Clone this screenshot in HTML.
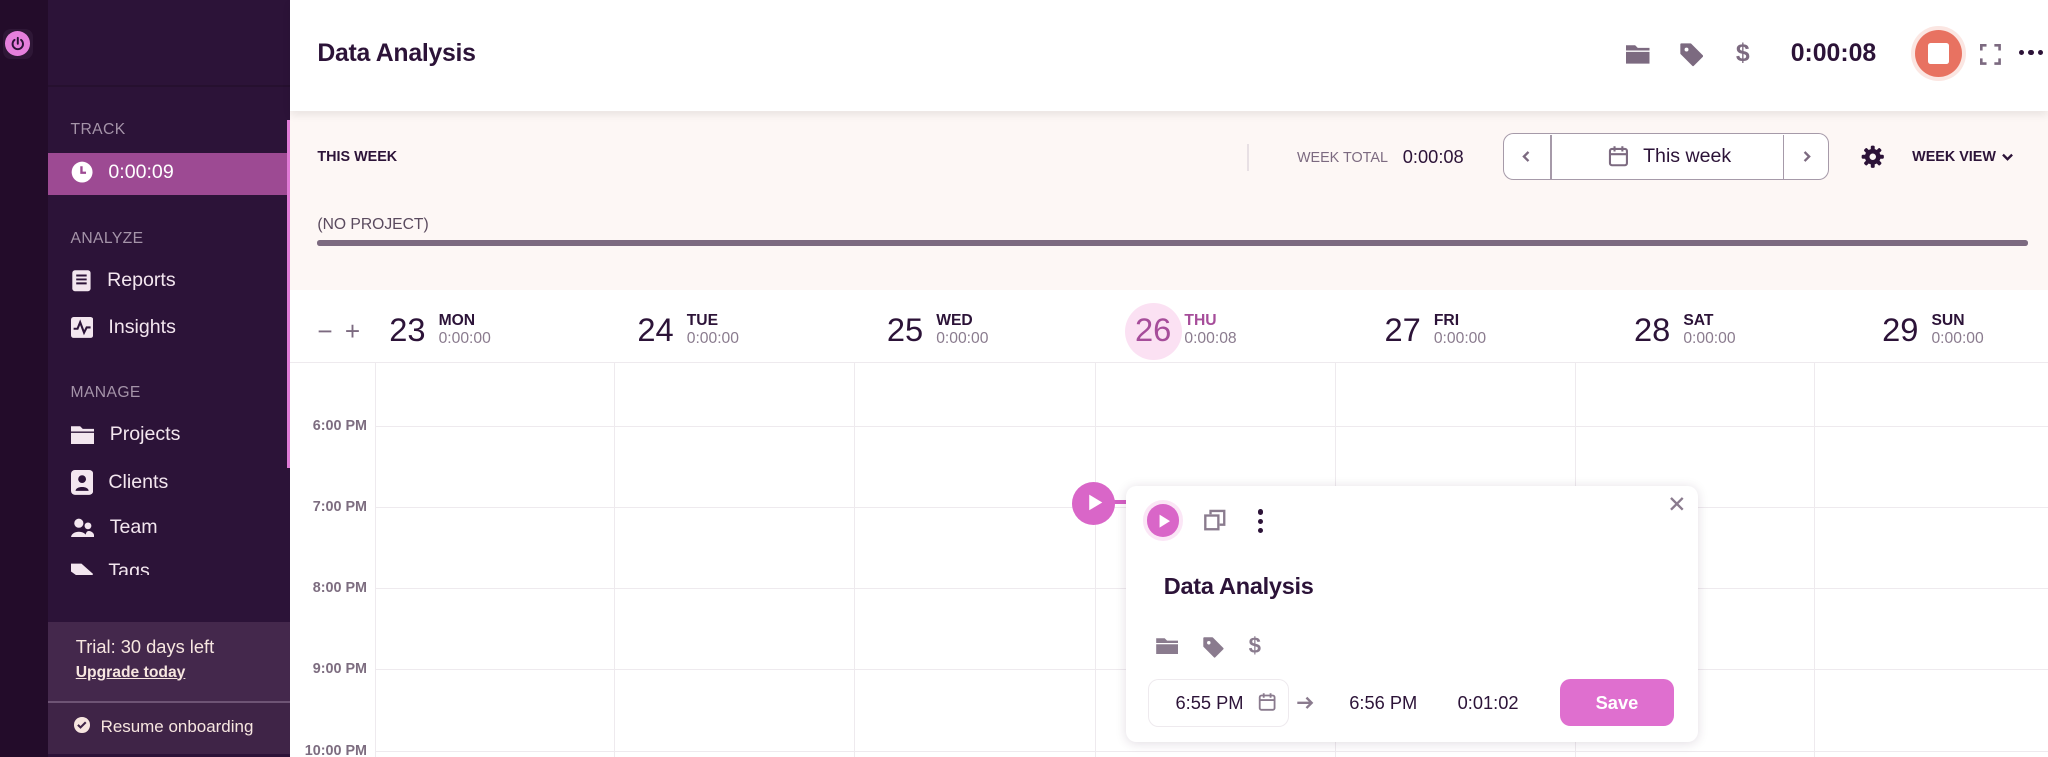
<!DOCTYPE html>
<html><head><meta charset="utf-8">
<style>
html,body{margin:0;padding:0;overflow:hidden;width:2048px;height:757px;background:#fff}
#w{zoom:1.30612;width:1568px;height:580px;position:relative;overflow:hidden;font-family:"Liberation Sans",sans-serif;color:#2c1338}
.a{position:absolute}
.side .lbl{position:absolute;left:54px;font-size:12px;color:#a594a9;letter-spacing:.3px}
.side .it{position:absolute;left:54px;font-size:15px;color:#f3e6ef;display:flex;align-items:center;gap:12px}
.ic{width:16px;height:16px;background:#f3e6ef;border-radius:2px;display:inline-block}
.day{position:absolute;top:238px;display:flex;align-items:center;gap:10px}
.day .n{font-size:25px;color:#2c1338;font-weight:300}
.day .d{font-size:12px;font-weight:bold;line-height:14px}
.day .t{font-size:12px;color:#8a7b8e;font-weight:normal}
.vl{position:absolute;top:278px;width:1px;height:302px;background:#eeeaee}
.hl{position:absolute;left:287px;width:1281px;height:1px;background:#eeeaee}
.tm{position:absolute;right:1287px;font-size:11px;color:#7d6d80;font-weight:bold;transform:translateY(-50%)}
</style></head><body><div id="w">
<!-- far strip -->
<div class="a" style="left:0;top:0;width:37px;height:580px;background:#230c2a"></div>
<div class="a" style="left:2px;top:22px;width:23px;height:23px;border-radius:6px;background:#2e1736"></div>
<div class="a" style="left:4px;top:24px;width:19px;height:19px;border-radius:50%;background:#e57fdc"></div>
<svg class="a" style="left:6px;top:26px" width="15" height="15" viewBox="0 0 15 15"><path d="M5 4.5a4 4 0 1 0 5 0M7.5 3v4.5" stroke="#2c1338" stroke-width="1.5" fill="none" stroke-linecap="round"/></svg>
<!-- sidebar -->
<div class="side a" style="left:37px;top:0;width:185px;height:580px;background:#2c1338">
<div class="a" style="left:0;top:0;width:185px;height:65px;background:#2c1338;border-bottom:2px solid #26102f"></div>
</div>
<div class="side a" style="left:0;top:0;width:222px;height:580px">
<div class="lbl" style="top:93px">TRACK</div>
<div class="a" style="left:37px;top:117px;width:183px;height:32px;background:#9d4a93"></div>
<div class="it" style="top:123px;color:#fff"><svg width="17" height="17" viewBox="0 0 17 17"><circle cx="8.5" cy="8.5" r="8" fill="#fff"/><path d="M8 4v5h3.5" stroke="#9d4a93" stroke-width="1.8" fill="none"/></svg>0:00:09</div>
<div class="lbl" style="top:176px">ANALYZE</div>
<div class="it" style="top:206px"><svg width="16" height="18" viewBox="0 0 16 18"><rect x="1" y="1" width="14" height="16" rx="2" fill="#f3e6ef"/><path d="M4 5h8M4 8h8M4 11h8" stroke="#2c1338" stroke-width="1.5"/></svg>Reports</div>
<div class="it" style="top:242px"><svg width="17" height="16" viewBox="0 0 17 16"><rect x="0" y="0" width="17" height="16" rx="2" fill="#f3e6ef"/><path d="M2 9h3l2-5 3 8 2-4h3" stroke="#2c1338" stroke-width="1.6" fill="none"/></svg>Insights</div>
<div class="lbl" style="top:294px">MANAGE</div>
<div class="it" style="top:324px"><svg width="18" height="15" viewBox="0 0 18 15"><path d="M0 1h7l2 2h9v2H0zM0 6h18v9H0z" fill="#f3e6ef"/></svg>Projects</div>
<div class="it" style="top:360px"><svg width="17" height="19" viewBox="0 0 17 19"><rect width="17" height="19" rx="3" fill="#f3e6ef"/><circle cx="8.5" cy="7" r="3" fill="#2c1338"/><path d="M3.5 16c0-4 10-4 10 0z" fill="#2c1338"/></svg>Clients</div>
<div class="it" style="top:395px"><svg width="18" height="15" viewBox="0 0 18 15"><circle cx="6" cy="4" r="3.5" fill="#f3e6ef"/><path d="M0 15c0-6 12-6 12 0z" fill="#f3e6ef"/><circle cx="13" cy="6" r="2.6" fill="#f3e6ef"/><path d="M11 15c0-3 1-5 2.5-5S18 11 18 15z" fill="#f3e6ef"/></svg>Team</div>
<div class="a" style="left:54px;top:428px;width:140px;height:12px;overflow:hidden"><div class="it" style="left:0;top:1px"><svg width="17" height="16" viewBox="0 0 17 16"><path d="M0 2h8l9 8-6 6L0 8z" fill="#f3e6ef"/></svg>Tags</div></div>
<div class="a" style="left:37px;top:476px;width:185px;height:61px;background:#44284c"></div>
<div class="a" style="left:58px;top:487px;font-size:14px;color:#f7e6e0">Trial: 30 days left</div>
<div class="a" style="left:58px;top:508px;font-size:12px;color:#f7e6e0;font-weight:bold;text-decoration:underline">Upgrade today</div>
<div class="a" style="left:37px;top:537px;width:185px;height:1px;background:#6e5475"></div>
<div class="a" style="left:37px;top:538px;width:185px;height:39px;background:#3f2447"></div>
<div class="a" style="left:57px;top:549px;width:12px;height:12px;border-radius:50%;background:#f7e6e0"></div>
<svg class="a" style="left:57px;top:549px" width="12" height="12"><path d="M3 6l2 2 4-4" stroke="#3f2447" stroke-width="1.6" fill="none"/></svg>
<div class="a" style="left:77px;top:549px;font-size:13px;color:#f7e6e0">Resume onboarding</div>
<div class="a" style="left:220px;top:92px;width:2px;height:266px;background:#e07ad6"></div>
</div>
<!-- header -->
<div class="a" style="left:222px;top:0;width:1346px;height:85px;background:#fff;box-shadow:0 3px 6px rgba(0,0,0,.08);z-index:2"></div>
<div class="a" style="left:243px;top:31px;font-size:19px;font-weight:bold;z-index:3;letter-spacing:-.2px">Data Analysis</div>
<svg class="a" style="left:1245px;top:34px;z-index:3" width="18" height="15" viewBox="0 0 18 15"><path d="M0 1h7l2 2h9v2H0zM0 6h18v9H0z" fill="#7c6a80"/></svg>
<svg class="a" style="left:1286px;top:33px;z-index:3" width="18" height="18" viewBox="0 0 18 18"><path d="M1 1h7l9 9-7 7-9-9z" fill="#7c6a80" stroke="#7c6a80" stroke-linejoin="round" stroke-width="1.5"/><circle cx="5" cy="5" r="1.5" fill="#fff"/></svg>
<div class="a" style="left:1329px;top:31px;font-size:19px;font-weight:bold;color:#7c6a80;z-index:3">$</div>
<div class="a" style="left:1371px;top:31px;font-size:19px;font-weight:bold;z-index:3">0:00:08</div>
<div class="a" style="left:1463px;top:20px;width:42px;height:42px;border-radius:50%;background:#fbe6e2;z-index:3"></div>
<div class="a" style="left:1466px;top:23px;width:36px;height:36px;border-radius:50%;background:#e87261;z-index:3"></div>
<div class="a" style="left:1476px;top:33px;width:16px;height:16px;border-radius:2px;background:#fff;z-index:3"></div>
<svg class="a" style="left:1516px;top:34px;z-index:3" width="16" height="16" viewBox="0 0 16 16"><path d="M1 5V1h4M11 1h4v4M15 11v4h-4M5 15H1v-4" stroke="#7c6a80" stroke-width="2" fill="none"/></svg>
<div class="a" style="left:1546px;top:38px;z-index:3;display:flex;gap:3px"><i style="width:4px;height:4px;border-radius:50%;background:#2c1338"></i><i style="width:4px;height:4px;border-radius:50%;background:#2c1338"></i><i style="width:4px;height:4px;border-radius:50%;background:#2c1338"></i></div>
<!-- summary -->
<div class="a" style="left:222px;top:85px;width:1346px;height:137px;background:#fdf7f5"></div>
<div class="a" style="left:243px;top:114px;font-size:11px;font-weight:bold">THIS WEEK</div>
<div class="a" style="left:955px;top:110px;width:1px;height:21px;background:#e8e0e4"></div>
<div class="a" style="left:993px;top:115px;font-size:11px;color:#7c6a80">WEEK TOTAL</div>
<div class="a" style="left:1074px;top:112px;font-size:14px">0:00:08</div>
<div class="a" style="left:1151px;top:102px;width:248px;height:34px;border:1px solid #a69aa9;border-radius:8px;background:#fff"></div>
<div class="a" style="left:1187px;top:103px;width:1px;height:34px;background:#a69aa9"></div>
<div class="a" style="left:1365px;top:103px;width:1px;height:34px;background:#a69aa9"></div>
<svg class="a" style="left:1164px;top:115px" width="10" height="10"><path d="M6.5 1.5L3 5l3.5 3.5" stroke="#7c6a80" stroke-width="1.8" fill="none"/></svg>
<svg class="a" style="left:1378px;top:115px" width="10" height="10"><path d="M3.5 1.5L7 5 3.5 8.5" stroke="#7c6a80" stroke-width="1.8" fill="none"/></svg>
<svg class="a" style="left:1231px;top:111px" width="16" height="17" viewBox="0 0 16 17"><rect x="1.5" y="3" width="13" height="12.5" rx="1.5" stroke="#7c6a80" stroke-width="1.6" fill="none"/><path d="M1.5 7h13M5 1v4M11 1v4" stroke="#7c6a80" stroke-width="1.6"/></svg>
<div class="a" style="left:1258px;top:111px;font-size:15px">This week</div>
<svg class="a" style="left:1425px;top:111px" width="18" height="18" viewBox="0 0 18 18"><g fill="#2c1338"><circle cx="9" cy="9" r="6"/><rect x="7.5" y="0.5" width="3" height="17" rx="1"/><rect x="0.5" y="7.5" width="17" height="3" rx="1"/><rect x="7.5" y="0.5" width="3" height="17" rx="1" transform="rotate(45 9 9)"/><rect x="7.5" y="0.5" width="3" height="17" rx="1" transform="rotate(-45 9 9)"/></g><circle cx="9" cy="9" r="2.5" fill="#fdf7f5"/></svg>
<div class="a" style="left:1464px;top:114px;font-size:11px;font-weight:bold">WEEK VIEW</div>
<svg class="a" style="left:1532px;top:116px" width="10" height="8"><path d="M1.5 2l3.5 3.5L8.5 2" stroke="#2c1338" stroke-width="1.8" fill="none"/></svg>
<div class="a" style="left:243px;top:165px;font-size:12px;color:#5a4a5e">(NO PROJECT)</div>
<div class="a" style="left:243px;top:184px;width:1310px;height:4px;border-radius:2px;background:#7c6a80"></div>
<!-- day header -->
<div class="a" style="left:222px;top:277px;width:1346px;height:1px;background:#eeeaee"></div>
<div class="a" style="left:243px;top:242px;font-size:20px;color:#7c6a80">−</div>
<div class="a" style="left:264px;top:242px;font-size:20px;color:#7c6a80">+</div>
<div class="a" style="left:861px;top:232px;width:44px;height:44px;border-radius:50%;background:#fbe1f3"></div>
<div class="day" style="left:298px"><span class="n">23</span><div class="d">MON<br><span class="t">0:00:00</span></div></div>
<div class="day" style="left:488px"><span class="n">24</span><div class="d">TUE<br><span class="t">0:00:00</span></div></div>
<div class="day" style="left:679px"><span class="n">25</span><div class="d">WED<br><span class="t">0:00:00</span></div></div>
<div class="day" style="left:869px"><span class="n" style="color:#a64d9a">26</span><div class="d" style="color:#a64d9a">THU<br><span class="t">0:00:08</span></div></div>
<div class="day" style="left:1060px"><span class="n">27</span><div class="d">FRI<br><span class="t">0:00:00</span></div></div>
<div class="day" style="left:1251px"><span class="n">28</span><div class="d">SAT<br><span class="t">0:00:00</span></div></div>
<div class="day" style="left:1441px"><span class="n">29</span><div class="d">SUN<br><span class="t">0:00:00</span></div></div>
<!-- grid -->
<div class="vl" style="left:287px"></div><div class="vl" style="left:470px"></div><div class="vl" style="left:654px"></div><div class="vl" style="left:838px"></div><div class="vl" style="left:1022px"></div><div class="vl" style="left:1206px"></div><div class="vl" style="left:1389px"></div>
<div class="hl" style="top:326px"></div><div class="hl" style="top:388px"></div><div class="hl" style="top:450px"></div><div class="hl" style="top:512px"></div><div class="hl" style="top:575px"></div>
<div class="tm" style="top:326px">6:00 PM</div><div class="tm" style="top:388px">7:00 PM</div><div class="tm" style="top:450px">8:00 PM</div><div class="tm" style="top:512px">9:00 PM</div><div class="tm" style="top:575px">10:00 PM</div>
<!-- play marker -->
<div class="a" style="left:845px;top:383px;width:20px;height:3px;background:#d45fc4"></div>
<div class="a" style="left:821px;top:369px;width:33px;height:33px;border-radius:50%;background:#d966c8"></div>
<svg class="a" style="left:830px;top:377px" width="16" height="16"><path d="M4 2l10 6-10 6z" fill="#fff"/></svg>
<!-- popup -->
<div class="a" style="left:862px;top:372px;width:438px;height:196px;background:#fff;border-radius:8px;box-shadow:0 1px 8px rgba(60,30,70,.15)"></div>
<div class="a" style="left:875px;top:383px;width:31px;height:31px;border-radius:50%;background:#fbe6f6"></div>
<div class="a" style="left:878px;top:386px;width:25px;height:25px;border-radius:50%;background:#d966c8"></div>
<svg class="a" style="left:884px;top:392px" width="14" height="14"><path d="M3.5 2l8 5-8 5z" fill="#fff"/></svg>
<svg class="a" style="left:922px;top:390px" width="17" height="17" viewBox="0 0 17 17"><rect x="1" y="5" width="10" height="10.5" stroke="#8a7b8e" stroke-width="1.8" fill="none"/><path d="M5 4V1.5h10.5V12H12" stroke="#8a7b8e" stroke-width="1.8" fill="none"/></svg>
<div class="a" style="left:963px;top:390px;display:flex;flex-direction:column;gap:3px"><i style="width:4px;height:4px;border-radius:50%;background:#2c1338"></i><i style="width:4px;height:4px;border-radius:50%;background:#2c1338"></i><i style="width:4px;height:4px;border-radius:50%;background:#2c1338"></i></div>
<svg class="a" style="left:1278px;top:380px" width="12" height="12"><path d="M1.5 1.5l9 9M10.5 1.5l-9 9" stroke="#8a7b8e" stroke-width="1.8"/></svg>
<div class="a" style="left:891px;top:439px;font-size:18px;font-weight:bold;letter-spacing:-.2px">Data Analysis</div>
<svg class="a" style="left:885px;top:488px" width="17" height="13" viewBox="0 0 18 14"><path d="M0 1h7l2 2h9v2H0zM0 6h18v8H0z" fill="#8a7b8e"/></svg>
<svg class="a" style="left:921px;top:488px" width="16" height="16" viewBox="0 0 18 18"><path d="M1 1h7l9 9-7 7-9-9z" fill="#8a7b8e" stroke="#8a7b8e" stroke-linejoin="round" stroke-width="1.5"/><circle cx="5" cy="5" r="1.5" fill="#fff"/></svg>
<div class="a" style="left:956px;top:485px;font-size:17px;font-weight:bold;color:#8a7b8e">$</div>
<div class="a" style="left:879px;top:520px;width:106px;height:35px;border:1px solid #eeeaee;border-radius:8px"></div>
<div class="a" style="left:900px;top:530px;font-size:14px">6:55 PM</div>
<svg class="a" style="left:963px;top:530px" width="14" height="15" viewBox="0 0 16 17"><rect x="1.5" y="3" width="13" height="12.5" rx="1.5" stroke="#8a7b8e" stroke-width="1.6" fill="none"/><path d="M1.5 7h13M5 1v4M11 1v4" stroke="#8a7b8e" stroke-width="1.6"/></svg>
<svg class="a" style="left:992px;top:532px" width="14" height="12"><path d="M1 6h11M8 2l4 4-4 4" stroke="#8a7b8e" stroke-width="1.8" fill="none"/></svg>
<div class="a" style="left:1033px;top:530px;font-size:14px">6:56 PM</div>
<div class="a" style="left:1116px;top:530px;font-size:14px">0:01:02</div>
<div class="a" style="left:1194px;top:520px;width:88px;height:36px;border-radius:8px;background:#df6fcf;color:#fff;font-weight:bold;font-size:14px;text-align:center;line-height:36px">Save</div>
</div></body></html>
